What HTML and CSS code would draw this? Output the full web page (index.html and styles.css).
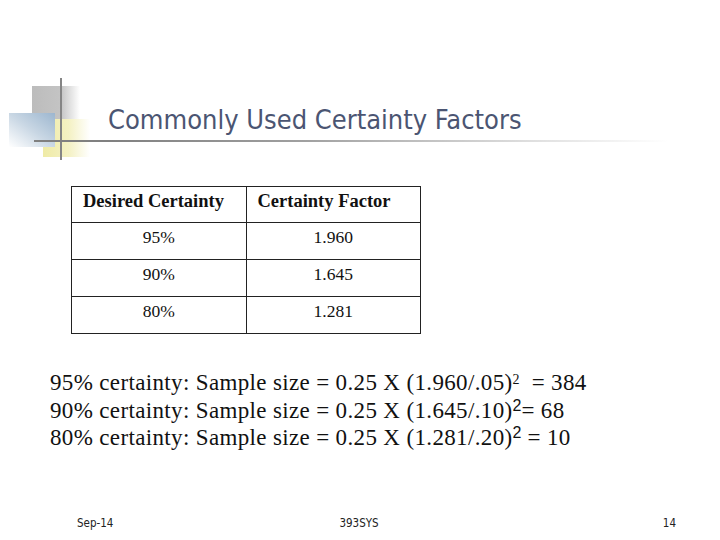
FILE: index.html
```html
<!DOCTYPE html>
<html lang="en">
<head>
    <meta charset="UTF-8">
    <title>Commonly Used Certainty Factors</title>
    <link rel="stylesheet" href="styles.css">
</head>
<body>
    <div class="slide">
        <div class="header">
            <svg class="logo" width="108" height="90" viewBox="0 0 108 90">
                <defs>
                    <linearGradient id="gray" x1="0" y1="0" x2="1" y2="0">
                        <stop offset="0" stop-color="#bcbcbc"/>
                        <stop offset="0.6" stop-color="#c4c4c4"/>
                        <stop offset="1" stop-color="#ffffff"/>
                    </linearGradient>
                    <linearGradient id="blue" x1="1" y1="0" x2="0" y2="1">
                        <stop offset="0" stop-color="#9cb6cf"/>
                        <stop offset="0.5" stop-color="#c9d7e4"/>
                        <stop offset="1" stop-color="#ffffff"/>
                    </linearGradient>
                    <linearGradient id="yellow" x1="0" y1="0" x2="1" y2="0">
                        <stop offset="0" stop-color="#efeba6"/>
                        <stop offset="0.55" stop-color="#f4f1c4"/>
                        <stop offset="1" stop-color="#ffffff"/>
                    </linearGradient>
                </defs>
                <rect x="32" y="11" width="48" height="42" fill="url(#gray)"/>
                <rect x="43" y="44" width="47" height="38" fill="url(#yellow)"/>
                <rect x="9" y="38" width="46" height="34" fill="url(#blue)"/>
                <line x1="61" y1="3" x2="61" y2="85" stroke="#858585" stroke-width="2"/>
                <line x1="34" y1="66" x2="108" y2="66" stroke="#808080" stroke-width="2"/>
            </svg>
            <div class="title-block">
                <h1>Commonly Used Certainty Factors</h1>
            </div>
        </div>

        <table class="factors">
            <tr>
                <th>Desired Certainty</th>
                <th>Certainty Factor</th>
            </tr>
            <tr><td>95%</td><td>1.960</td></tr>
            <tr><td>90%</td><td>1.645</td></tr>
            <tr><td>80%</td><td>1.281</td></tr>
        </table>

        <div class="sums">
            <p>95% certainty: Sample size = 0.25 X (1.960/.05)<sup class="small">2</sup>&nbsp; = 384</p>
            <p>90% certainty: Sample size = 0.25 X (1.645/.10)<sup class="big">2</sup>= 68</p>
            <p>80% certainty: Sample size = 0.25 X (1.281/.20)<sup class="big">2</sup> = 10</p>
        </div>

        <div class="footer">
            <span class="left">Sep-14</span>
            <span class="mid">393SYS</span>
            <span class="right">14</span>
        </div>
    </div>
</body>
</html>
```

FILE: styles.css
```css
body {
    margin: 0;
    padding: 0;
    background: white;
}

.slide {
    width: 720px;
    height: 540px;
    overflow: hidden;
    display: flex;
    flex-direction: column;
}

.header {
    display: flex;
    margin-top: 75px;
    height: 90px;
}

.logo {
    flex: none;
}

.title-block {
    width: 560px;
    height: 67px;
    display: flex;
    align-items: flex-end;
    background: linear-gradient(to right, #808080, #a0a0a0 35%, #dedede 75%, #ffffff) left bottom / 100% 2px no-repeat;
}

.title-block h1 {
    margin: 0 0 7px 0;
    font-family: "DejaVu Sans Condensed", "DejaVu Sans", sans-serif;
    font-stretch: condensed;
    font-weight: normal;
    font-size: 27px;
    line-height: 30px;
    color: #4b5572;
}

.factors {
    margin: 21px 0 0 71px;
    width: 350px;
    border-collapse: collapse;
    font-family: "Liberation Serif", serif;
    font-size: 17.5px;
    color: #111;
}

.factors th,
.factors td {
    border: 1px solid #222;
    width: 50%;
    padding: 0;
    vertical-align: top;
}

.factors th {
    font-size: 18.5px;
    text-align: left;
    padding: 4px 0 0 11px;
    height: 31px;
}

.factors td {
    text-align: center;
    padding-top: 4px;
    height: 32px;
}

.sums {
    margin: 35px 0 0 50px;
    font-family: "Liberation Serif", serif;
    font-size: 23px;
    letter-spacing: 0.35px;
    line-height: 27.5px;
    color: #111;
}

.sums p {
    margin: 0;
}

.sums sup {
    line-height: 0;
    vertical-align: 0.45em;
    letter-spacing: 0;
}

.sums sup.small {
    font-size: 14px;
}

.sums sup.big {
    font-family: "Liberation Sans", sans-serif;
    font-size: 16px;
}

.footer {
    margin-top: auto;
    margin-bottom: 10px;
    display: grid;
    grid-template-columns: 1fr 1fr 1fr;
    padding: 0 44px 0 77px;
    font-family: "DejaVu Sans Condensed", "DejaVu Sans", sans-serif;
    font-stretch: condensed;
    font-size: 11.5px;
    color: #222;
}

.footer .mid {
    text-align: center;
    padding-right: 35px;
}

.footer .right {
    text-align: right;
}
```
